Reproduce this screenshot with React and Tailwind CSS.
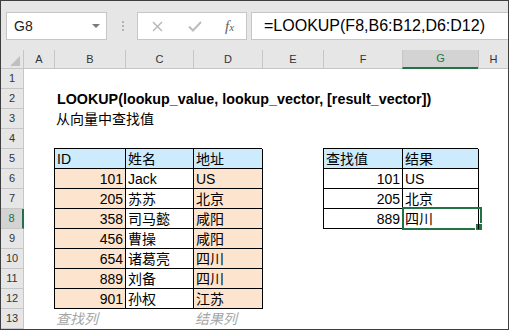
import React from "react";
import clsx from "clsx";

const font = "font-['Liberation_Sans','Noto_Sans_CJK_SC',sans-serif]";

const columns = ["A", "B", "C", "D", "E", "F", "G", "H"];

const widths = {
  A: "w-[30px]",
  B: "w-[71px]",
  C: "w-[68px]",
  D: "w-[69px]",
  E: "w-[61px]",
  F: "w-[79px]",
  G: "w-[76px]",
  H: "flex-1",
};

const people = [
  [101, "Jack", "US"],
  [205, "苏苏", "北京"],
  [358, "司马懿", "咸阳"],
  [456, "曹操", "咸阳"],
  [654, "诸葛亮", "四川"],
  [889, "刘备", "四川"],
  [901, "孙权", "江苏"],
];

const lookups = [
  [101, "US"],
  [205, "北京"],
  [889, "四川"],
];

// cell contents keyed like "B6"
const cells = {
  B2: { text: "LOOKUP(lookup_value, lookup_vector, [result_vector])", bold: true },
  B3: { text: "从向量中查找值" },
  B5: { text: "ID" },
  C5: { text: "姓名" },
  D5: { text: "地址" },
  F5: { text: "查找值" },
  G5: { text: "结果" },
  B13: { text: "查找列", note: true },
  D13: { text: "结果列", note: true },
};

people.forEach(([id, name, city], i) => {
  cells["B" + (i + 6)] = { text: String(id), right: true };
  cells["C" + (i + 6)] = { text: name };
  cells["D" + (i + 6)] = { text: city };
});

lookups.forEach(([id, city], i) => {
  cells["F" + (i + 6)] = { text: String(id), right: true };
  cells["G" + (i + 6)] = { text: city };
});

const inTable = (col, row) => {
  if (["B", "C", "D"].includes(col) && row >= 5 && row <= 12) return true;
  if (["F", "G"].includes(col) && row >= 5 && row <= 8) return true;
  return false;
};

const prevCol = (col) => columns[columns.indexOf(col) - 1];

const cellBg = (col, row) => {
  if (!inTable(col, row)) return "";
  if (row === 5) return "bg-[#ccecfd]";
  if ((col === "B" || col === "D") && row <= 12) return "bg-[#fde4cf]";
  return "";
};

const Cell = ({ col, row }) => {
  const data = cells[col + row];
  const here = inTable(col, row);
  const selected = col === "G" && row === 8;

  return (
    <div
      className={clsx(
        "relative h-full flex items-center whitespace-nowrap shrink-0",
        widths[col],
        cellBg(col, row),
        (here || (prevCol(col) && inTable(prevCol(col), row))) && "border-l border-l-black",
        (here || inTable(col, row + 1)) && "border-b border-b-black",
        data?.right ? "justify-end pr-[2px]" : data?.bold ? "pl-[3px]" : "pl-[2px]"
      )}
    >
      {data && (
        <span
          className={clsx(
            "leading-none",
            data.bold ? "font-bold text-[14.3px]" : "text-[14px]",
            data.note ? "italic text-[#a6a6a6]" : "text-black"
          )}
        >
          {data.text}
        </span>
      )}
      {selected && (
        <div className="absolute -left-[1px] -top-[2px] w-[80px] h-[23px] border-2 border-[#217346]">
          <div className="absolute left-[71px] top-[14px] w-[8px] h-[8px] border border-white bg-[#217346]" />
        </div>
      )}
    </div>
  );
};

const Toolbar = () => (
  <div className="h-[49px] flex items-start pt-[11px] pl-[5px] bg-[#e6e6e6]">
    {/* name box */}
    <div className="w-[101px] h-[28px] bg-white border border-[#c6c6c6] flex items-center justify-between pl-[7px] pr-[6px]">
      <span className="text-[14px] text-[#222]">G8</span>
      <svg width="8" height="5" viewBox="0 0 8 5">
        <path d="M0 0 L8 0 L4 4 Z" fill="#7b7b7b" />
      </svg>
    </div>

    <div className="ml-[15px] h-[28px] flex flex-col justify-center gap-[2px]">
      <div className="w-[2px] h-[2px] bg-[#b3b3b3]" />
      <div className="w-[2px] h-[2px] bg-[#b3b3b3]" />
      <div className="w-[2px] h-[2px] bg-[#b3b3b3]" />
    </div>

    {/* cancel / enter / fx */}
    <div className="ml-[13px] w-[110px] h-[28px] bg-white border border-[#c6c6c6] flex items-center pl-[14px]">
      <svg width="11" height="11" viewBox="0 0 11 11">
        <path d="M1 1 L10 10 M10 1 L1 10" stroke="#b5b5b5" strokeWidth="1.4" />
      </svg>
      <svg className="ml-[25px]" width="14" height="11" viewBox="0 0 14 11">
        <path d="M1 5.5 L5 9.5 L13 1" stroke="#bdbdbd" strokeWidth="2" fill="none" />
      </svg>
      <span className="ml-[23px] font-['Liberation_Serif',serif] italic text-[15px] text-[#5f5f5f] leading-none">
        f<span className="text-[11px]">x</span>
      </span>
    </div>

    {/* formula box */}
    <div className="ml-[4px] flex-1 h-[28px] bg-white border border-r-0 border-[#c6c6c6] flex items-center pl-[12px]">
      <span className="text-[16px] text-black">=LOOKUP(F8,B6:B12,D6:D12)</span>
    </div>
  </div>
);

const ColumnHeader = () => (
  <div className="h-[19px] flex bg-[#e6e6e6] border-b border-[#c6c6c6]">
    <div className="w-[23px] shrink-0 border-r border-[#c6c6c6] flex items-end justify-end pr-[3px] pb-[2px]">
      <svg width="10" height="10" viewBox="0 0 10 10">
        <path d="M10 0 L10 10 L0 10 Z" fill="#bfbfbf" />
      </svg>
    </div>
    {columns.map((col) => (
      <div
        key={col}
        className={clsx(
          "shrink-0 flex items-center justify-center text-[11px]",
          widths[col],
          col !== "A" && "border-l border-[#c6c6c6]",
          col === "G"
            ? "bg-[#d3d3d3] text-[#217346] border-b-2 border-b-[#217346] -mb-[1px]"
            : "text-[#333]"
        )}
      >
        {col}
      </div>
    ))}
  </div>
);

export default function App() {
  const rows = Array.from({ length: 13 }, (_, i) => i + 1);

  return (
    <div className={clsx("w-[509px] h-[330px] border border-[#3f3f3f] bg-white flex flex-col overflow-hidden", font)}>
      <Toolbar />
      <ColumnHeader />
      {rows.map((row) => (
        <div key={row} className={clsx("flex", row === 13 ? "flex-1" : "h-[20px]")}>
          <div
            className={clsx(
              "w-[23px] shrink-0 flex items-center justify-center text-[11px] border-b",
              row === 8
                ? "bg-[#d3d3d3] text-[#217346] border-r-2 border-r-[#217346] border-b-[#c6c6c6]"
                : "bg-[#e6e6e6] text-[#333] border-r border-[#c6c6c6]"
            )}
          >
            {row}
          </div>
          {columns.map((col) => (
            <Cell key={col} col={col} row={row} />
          ))}
        </div>
      ))}
    </div>
  );
}
